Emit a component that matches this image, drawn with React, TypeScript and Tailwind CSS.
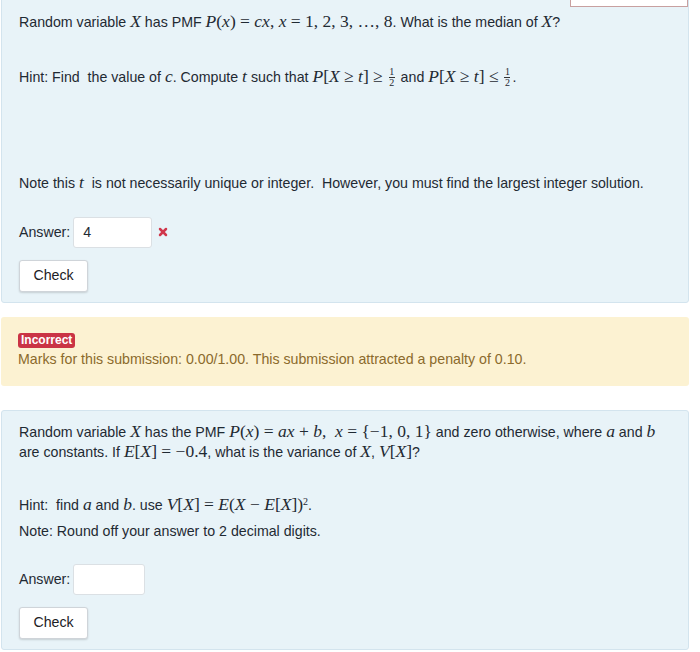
import { X } from "lucide-react"

function M({ children }: { children: React.ReactNode }) {
  return <span className="font-['Liberation_Serif',serif] text-[17.5px]">{children}</span>
}

function I({ children }: { children: React.ReactNode }) {
  return <i className="font-['Liberation_Serif',serif]">{children}</i>
}

function Half() {
  return (
    <span className="inline-flex flex-col items-center align-middle leading-none text-[10px] mx-[2px] -translate-y-[1px] font-['Liberation_Serif',serif]">
      <span>1</span>
      <span className="border-t border-[#333] w-[6px] h-0" />
      <span>2</span>
    </span>
  )
}

function AnswerRow({ value, wrong, width }: { value: string; wrong?: boolean; width: string }) {
  return (
    <div className="flex items-center gap-[3px]">
      <span>Answer:</span>
      <div className={`h-[31px] ${width} bg-white border border-[#dbe0e4] rounded-[3px] px-[9px] flex items-center`}>
        {value}
      </div>
      {wrong && <X className="w-[12px] h-[12px] text-[#d0374c] ml-[2px]" strokeWidth={5} />}
    </div>
  )
}

function CheckButton() {
  return (
    <button className="w-[69px] h-[32px] bg-white border border-[#cfd4d9] rounded-[3px] shadow-[0_1px_2px_rgba(0,0,0,0.15)] text-[#1d2125]">
      Check
    </button>
  )
}

export default function App() {
  return (
    <div className="relative w-[700px] h-[652px] overflow-hidden bg-white font-['Liberation_Sans',sans-serif] text-[14.2px] text-[#1f2a33]">
      <div className="absolute right-[12px] top-[-4px] w-[118px] h-[11px] bg-white border border-[#c8a0a0]" />

      <div className="ml-[1px] w-[688px] -mt-[4px] bg-[#e8f3f8] border border-[#d3e4ee] rounded-[3px] px-[17px] pt-[15px] pb-[10px]">
        <p className="leading-[18px]">
          Random variable <M><I>X</I></M> has PMF <M><I>P</I>(<I>x</I>) = <I>cx</I>, <I>x</I> = 1, 2, 3, …, 8</M>. What is the median of <M><I>X</I></M>?
        </p>
        <p className="mt-[36px] leading-[18px]">
          Hint: Find&nbsp; the value of <M><I>c</I></M>. Compute <M><I>t</I></M> such that <M><I>P</I>[<I>X</I> ≥ <I>t</I>] ≥</M> <Half /> and <M><I>P</I>[<I>X</I> ≥ <I>t</I>] ≤</M> <Half />.
        </p>
        <p className="mt-[84px] leading-[18px]">
          Note this <M><I>t</I></M>&nbsp; is not necessarily unique or integer.&nbsp; However, you must find the largest integer solution.
        </p>
        <div className="mt-[25px]">
          <AnswerRow value="4" wrong width="w-[79px]" />
        </div>
        <div className="mt-[12px]">
          <CheckButton />
        </div>
      </div>

      <div className="ml-[1px] mt-[14px] w-[688px] h-[69px] bg-[#fcf2d2] rounded-[3px] px-[17px] pt-[12px]">
        <span className="inline-block bg-[#ca3445] text-white font-bold text-[12px] leading-[15px] px-[3px] rounded-[3px]">
          Incorrect
        </span>
        <p className="leading-[18px] text-[#8b6a2c]">
          Marks for this submission: 0.00/1.00. This submission attracted a penalty of 0.10.
        </p>
      </div>

      <div className="ml-[1px] mt-[24px] w-[688px] bg-[#e8f3f8] border border-[#d3e4ee] rounded-[3px] px-[17px] pt-[11px] pb-[10px]">
        <p className="leading-[19px]">
          Random variable <M><I>X</I></M> has the PMF <M><I>P</I>(<I>x</I>) = <I>ax</I> + <I>b</I>,&nbsp; <I>x</I> = {"{"}−1, 0, 1{"}"}</M> and zero otherwise, where <M><I>a</I></M> and <M><I>b</I></M>
          <br />
          are constants. If <M><I>E</I>[<I>X</I>] = −0.4</M>, what is the variance of <M><I>X</I></M>, <M><I>V</I>[<I>X</I>]</M>?
        </p>
        <p className="mt-[33px] leading-[18px]">
          Hint:&nbsp; find <M><I>a</I></M> and <M><I>b</I></M>. use <M><I>V</I>[<I>X</I>] = <I>E</I>(<I>X</I> − <I>E</I>[<I>X</I>])<sup className="text-[10px]">2</sup></M>.
        </p>
        <p className="mt-[8px] leading-[18px]">Note: Round off your answer to 2 decimal digits.</p>
        <div className="mt-[24px]">
          <AnswerRow value="" width="w-[72px]" />
        </div>
        <div className="mt-[12px]">
          <CheckButton />
        </div>
      </div>
    </div>
  )
}
